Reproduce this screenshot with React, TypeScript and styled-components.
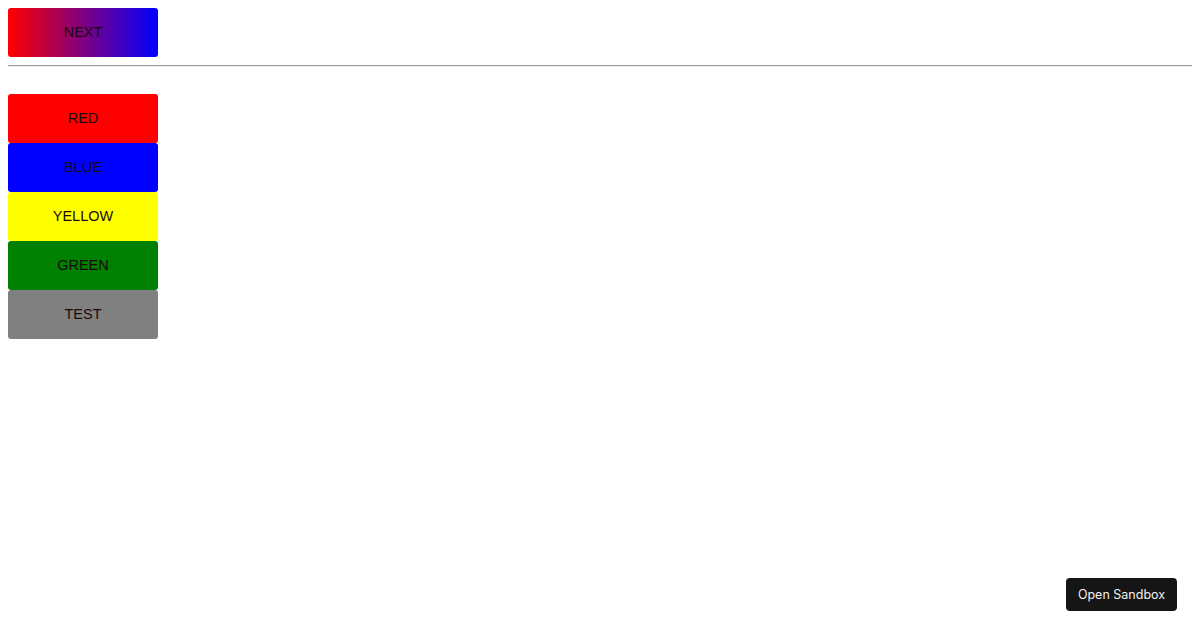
import styled, { createGlobalStyle } from "styled-components";

const GlobalStyle = createGlobalStyle`
    body {
        margin: 8px;
        background: #ffffff;
        font-family: "Liberation Sans", Arial, sans-serif;
    }
`;

const ColorButton = styled.button<{ bg: string }>`
    display: block;
    width: 150px;
    height: 49px;
    padding: 0 0 2px;
    border: none;
    border-radius: 3px;
    background: ${(props) => props.bg};
    color: #1a0a0a;
    font-family: "Liberation Sans", Arial, sans-serif;
    font-size: 14.5px;
    cursor: pointer;
`;

const Divider = styled.hr`
    margin: 8px 0 0;
    border: none;
    border-top: 1px solid #9a9a9a;
    border-bottom: 1px solid #eeeeee;
    height: 0;
`;

const ButtonList = styled.div`
    display: flex;
    flex-direction: column;
    padding-top: 27px;
`;

const SandboxButton = styled.button`
    position: fixed;
    right: 23px;
    bottom: 19px;
    width: 111px;
    height: 33px;
    padding: 0 0 1px;
    border: none;
    border-radius: 4px;
    background: #151515;
    color: #f2f2f2;
    font-family: Inter, "Liberation Sans", sans-serif;
    font-size: 12.5px;
    cursor: pointer;
`;

const colors = [
    { label: "RED", bg: "#ff0000" },
    { label: "BLUE", bg: "#0000ff" },
    { label: "YELLOW", bg: "#ffff00" },
    { label: "GREEN", bg: "#008000" },
    { label: "TEST", bg: "#808080" },
];

const App = () => {
    return (
        <>
            <GlobalStyle />
            <ColorButton bg="linear-gradient(to right, #ff0000, #0000ff)">NEXT</ColorButton>
            <Divider />
            <ButtonList>
                {colors.map((c) => (
                    <ColorButton key={c.label} bg={c.bg}>
                        {c.label}
                    </ColorButton>
                ))}
            </ButtonList>
            <SandboxButton>Open Sandbox</SandboxButton>
        </>
    );
};

export default App;
